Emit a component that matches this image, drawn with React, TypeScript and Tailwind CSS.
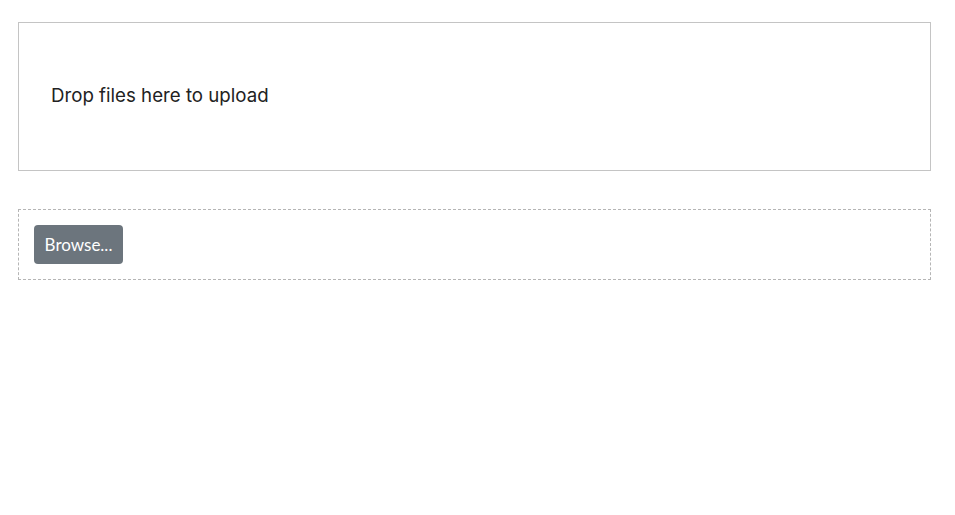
import React from 'react';

const App: React.FC = () => {
  return (
    <div className="min-h-screen bg-white pl-[18px] pr-[24px] pt-[22px]">
      {/* Drop zone */}
      <div
        className="flex h-[149px] items-center border border-[#c4c4c4] pb-[1px] pl-[32px] text-[18.7px] text-[#222]"
        style={{ fontFamily: 'Inter, "Noto Sans", sans-serif' }}
      >
        Drop files here to upload
      </div>

      {/* Browse area */}
      <div className="mt-[38px] border border-dashed border-[#b5b5b5] p-[15px]">
        <button
          className="flex h-[39px] w-[89px] items-center justify-center rounded-[4px] bg-[#6c757d] text-[17px] text-white"
          style={{ fontFamily: 'Lato, "Noto Sans", sans-serif' }}
        >
          Browse...
        </button>
      </div>
    </div>
  );
};

export default App;
